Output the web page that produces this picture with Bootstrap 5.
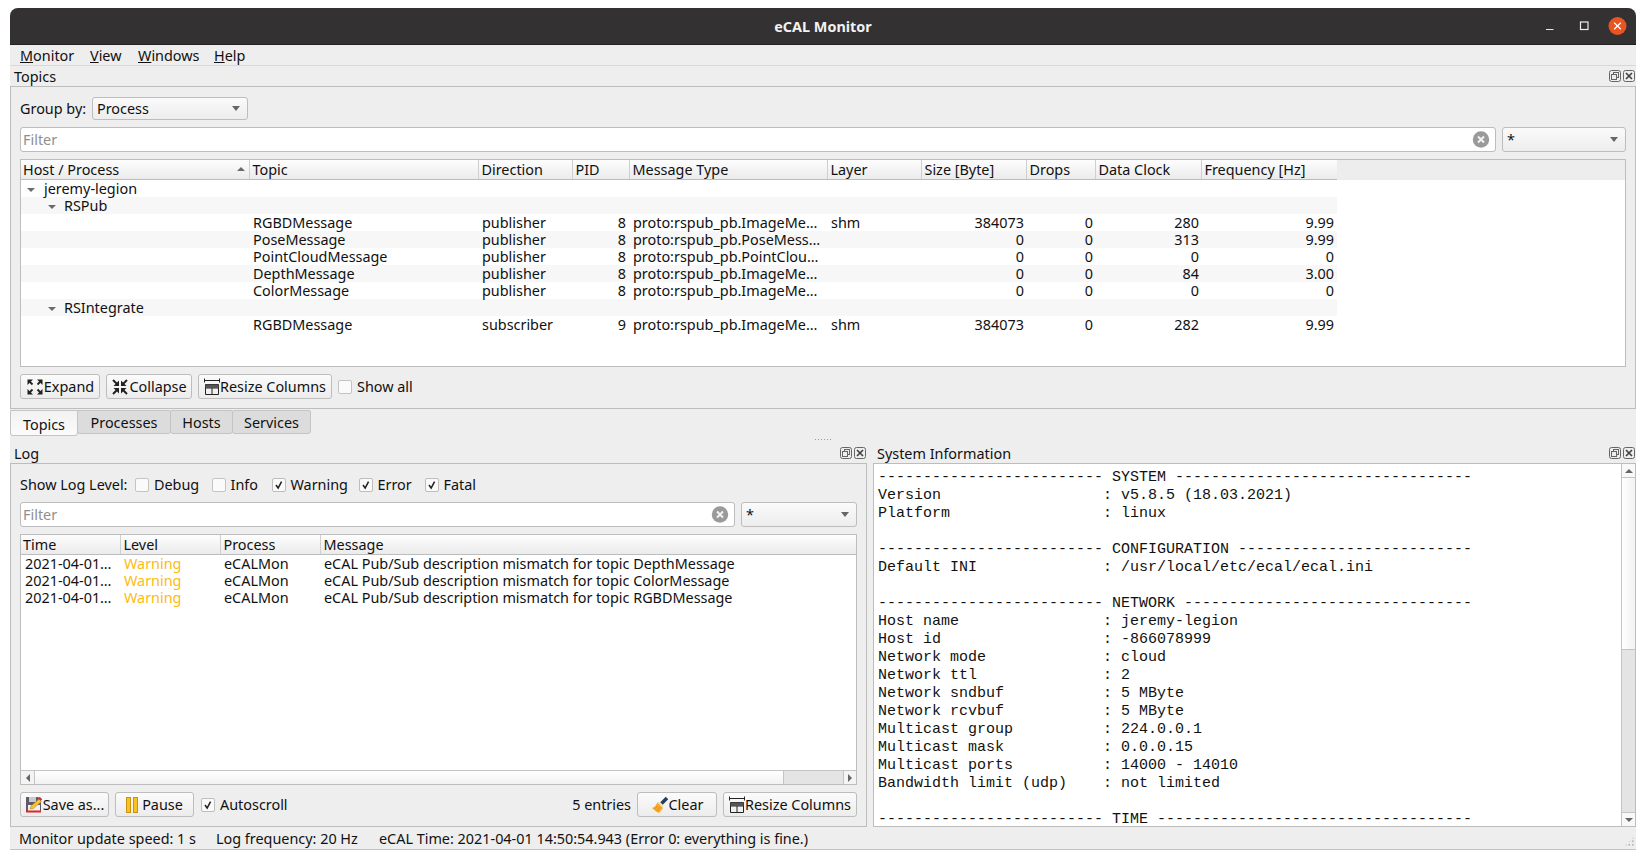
<!DOCTYPE html>
<html lang="en">
<head>
<meta charset="utf-8">
<title>eCAL Monitor</title>
<link href="https://cdn.jsdelivr.net/npm/bootstrap@5.3.0/dist/css/bootstrap.min.css" rel="stylesheet">
<style>
html,body{margin:0;height:859px;overflow:hidden;background:#fff;}
body{font-family:"Noto Sans","Open Sans",sans-serif;font-size:14.4px;line-height:17px;color:#111;}
.qwin{margin:8px 10px 0 10px;width:1626px;height:841px;display:flex;flex-direction:column;background:#eee;border-radius:8px 8px 0 0;overflow:hidden;border-bottom:1px solid #c4c4c4;box-sizing:content-box;}
.qtitle{height:37px;flex:none;background:#333132;color:#f2f2f2;font-weight:700;display:grid;grid-template-columns:1fr auto 1fr;align-items:center;font-family:"Noto Sans",sans-serif;font-size:14.4px;border-bottom:1px solid #222;}
.qctl{justify-self:end;display:flex;align-items:center;padding-right:8px;}
.qctl svg{display:block;}
.qmenu{height:21px;flex:none;display:flex;align-items:center;border-bottom:1px solid #d8d8d8;padding-left:10px;}
.qmenu span{display:block;}
.qmenu .m1{width:70px;}.qmenu .m2{width:48px;}.qmenu .m3{width:76px;}
.qdockhead{height:20px;flex:none;display:flex;align-items:center;justify-content:space-between;padding:0 1px 0 4px;}
.qdockbtns{display:flex;gap:2px;}
.qdockbtns svg{display:block;}
.qpanel{border:1px solid #bdbdbd;background:#eee;padding:0 9px;}
.qtop{height:323px;flex:none;}
.qrow1{margin-top:10px;height:23px;display:flex;align-items:center;}
.qrow2{margin-top:7px;height:25px;display:flex;gap:6px;}
.qlabel{display:block;flex:none;}
.qlb1{width:72px;}.qlb2{width:115px;}
.form-select.qcombo{font-size:14.4px;line-height:17px;padding:0 0 0 4px;color:#111;border:1px solid #bdbdbd;border-radius:3px;box-shadow:none;flex:none;
 background-color:#f4f4f4;background-image:url("data:image/svg+xml,%3Csvg xmlns='http://www.w3.org/2000/svg' width='8' height='5'%3E%3Cpath d='M0 0h8L4 5z' fill='%23666'/%3E%3C/svg%3E"),linear-gradient(#fafafa,#ededed);background-position:right 7px center,0 0;background-size:8px 5px,100% 100%;background-repeat:no-repeat;}
.qgroupsel{width:156px;height:23px;}
.qstarsel{width:124px;height:25px;}
.qstarsel2{width:116px;height:25px;}
.qfilterwrap{position:relative;flex:1 1 auto;}
.form-control.qfilter{height:25px;font-size:14.4px;line-height:17px;padding:0 2px;border:1px solid #bdbdbd;border-radius:3px;color:#111;box-shadow:none;}
.qfilter::placeholder{color:#8f8f8f;opacity:1;}
.qclear{position:absolute;right:6px;top:4px;display:block;}
.qtablebox{margin-top:7px;background:#fff;border:1px solid #bdbdbd;overflow:hidden;}
.qtb1{height:208px;}
.qtb2{height:251px;position:relative;display:flex;flex-direction:column;}
.table.qtable{table-layout:fixed;margin:0;font-size:14.4px;line-height:17px;--bs-table-bg:transparent;--bs-table-striped-bg:transparent;color:#111;width:100%;}
.qtable th,.qtable td{padding:0 3px 0 4px;border:0;box-shadow:none;white-space:nowrap;height:17px;font-weight:400;color:#111;}
.qtable thead th{height:19px;background:linear-gradient(#fdfdfd,#ebebeb);border-right:1px solid #cfcfcf;border-bottom:1px solid #bdbdbd;padding:0 0 0 3px;vertical-align:middle;position:relative;}
.qtable thead th:first-child{padding-left:2px;}
.qtable thead th:last-child{border-right:0;}
.qtable thead th.qheadfill{background:#ededed;border-bottom-color:#ededed;}
.qtable thead th.qnoedge{border-right:0;}
.qstrip td{background:#f7f7f7;}
.qnum{text-align:right;}
.qtable .qnum{padding-left:0;}
.qtable td.qnum:nth-child(n+7):nth-child(-n+9){padding-right:2px;}
.qcaret{display:inline-block;width:0;height:0;border-left:4px solid transparent;border-right:4px solid transparent;border-top:4px solid #6a6a6a;vertical-align:2px;}
.qsort{position:absolute;right:4px;top:7px;width:0;height:0;border-left:4px solid transparent;border-right:4px solid transparent;border-bottom:4px solid #6a6a6a;}
.qtable td.qi1{padding-left:6px;}.qi1 .qcaret{margin-right:9px;}
.qtable td.qi2{padding-left:27px;}.qi2 .qcaret{margin-right:8px;}
.qrow3{margin-top:7px;height:25px;display:flex;align-items:center;}
.btn.qbtn{height:25px;padding:0 3px;font-size:14.4px;line-height:17px;color:#111;background:linear-gradient(#fbfbfb,#ececec);border:1px solid #bdbdbd;border-radius:3px;display:flex;align-items:center;justify-content:center;white-space:nowrap;flex:none;}
.qbtn svg{display:block;flex:none;}
.w-exp{width:80px;}.w-col{width:86px;}.w-res{width:134px;}.w-save{width:89px;}.w-pause{width:79px;}.w-clear{width:80px;}
.btn.qgap6{margin-left:6px;}
.form-check-input.qchk{width:14px;height:14px;margin:0;border:1px solid #c4c4c4;border-radius:2px;background-color:#fafafa;flex:none;box-shadow:none;}
.form-check-input.qchk.qgap6{margin-left:6px;}
.form-check-input.qchk.qgap7{margin-left:7px;}
.form-check-input.qchk:checked{background-color:#fafafa;border-color:#bdbdbd;background-image:url("data:image/svg+xml,%3Csvg xmlns='http://www.w3.org/2000/svg' viewBox='0 0 14 14'%3E%3Cpath d='M3.5 7l2.5 3.5L10 3' fill='none' stroke='%23222' stroke-width='1.8'/%3E%3C/svg%3E");background-size:100% 100%;}
.qchklabel{margin-left:5px;}
.nav.qtabs{height:27px;flex:none;margin-top:0;border:0;align-items:flex-start;flex-wrap:nowrap;padding-top:1px;}
.qtabs .nav-link{height:24px;padding:0;display:flex;align-items:center;justify-content:center;color:#111;background:#dcdcdc;border:1px solid #c4c4c4;border-top-color:#c4c4c4;border-radius:2px 2px 3px 3px;margin:0 0 0 -1px;}
.qtabs .nav-link.active{height:26px;background:linear-gradient(#f2f2f2,#fbfbfb);border-color:#c4c4c4;border-radius:0 0 3px 3px;margin:0;color:#111;padding-top:2px;}
.t1{width:68px;}.t2{width:94px;}.t3{width:63px;}.t4{width:79px;}
.qsplit{height:7px;flex:none;display:flex;justify-content:center;align-items:flex-start;}
.qdots{width:16px;height:1px;margin-top:3px;background:repeating-linear-gradient(90deg,#9a9a9a 0 1px,transparent 1px 3px);}
.qbottom{height:384px;flex:none;display:flex;gap:6px;}
.qlog{width:857px;flex:none;display:flex;flex-direction:column;}
.qsys{flex:1 1 auto;display:flex;flex-direction:column;min-width:0;}
.qlogpanel{height:364px;flex:none;}
.qlevels{height:17px;margin-top:12px;display:flex;align-items:center;}
.qlv{display:flex;align-items:center;flex:none;}
.lv1{width:76.5px;}.lv2{width:60px;}.lv3{width:87px;}.lv4{width:66px;}
.qrow2b{margin-top:9px;}
.qtable td.qlevel-warn{color:#fdbb11;}
.qlogarea{flex:1 1 auto;min-height:0;}
.qhscroll{height:14px;flex:none;display:flex;border-top:1px solid #c4c4c4;background:#e4e4e4;}
.qsb{width:14px;flex:none;background:#f4f4f4;display:flex;align-items:center;justify-content:center;}
.qsb.l{border-right:1px solid #c4c4c4;}.qsb.r{border-left:1px solid #c4c4c4;width:13px;}
.qsthumb{flex:none;width:749px;background:linear-gradient(#fff,#f2f2f2);border-right:1px solid #c4c4c4;}
.qstrack{flex:1 1 auto;}
.qtri{display:block;width:0;height:0;}
.tl{border-top:4px solid transparent;border-bottom:4px solid transparent;border-right:4px solid #666;}
.tr{border-top:4px solid transparent;border-bottom:4px solid transparent;border-left:4px solid #666;}
.tu{border-left:4px solid transparent;border-right:4px solid transparent;border-bottom:4px solid #666;}
.td{border-left:4px solid transparent;border-right:4px solid transparent;border-top:4px solid #666;}
.qentries{margin-left:auto;margin-right:6px;}
.qsyspanel{height:364px;flex:none;padding:0;background:#fff;display:flex;}
.qmono{flex:1 1 auto;min-width:0;margin:0;padding:5px 0 0 4px;overflow:visible;font-family:"Liberation Mono",monospace;font-size:15px;line-height:18px;color:#111;background:#fff;}
.qvscroll{width:14px;flex:none;display:flex;flex-direction:column;border-left:1px solid #c4c4c4;background:#e4e4e4;}
.qvb{height:14px;flex:none;background:#f8f8f8;display:flex;align-items:center;justify-content:center;}
.qvb.u{border-bottom:1px solid #c4c4c4;}.qvb.d{border-top:1px solid #c4c4c4;}
.qvthumb{height:172px;flex:none;background:linear-gradient(90deg,#fff,#f2f2f2);border-bottom:1px solid #c4c4c4;}
.qvtrack{flex:1 1 auto;}
.qstatus{height:21px;flex:none;display:flex;align-items:center;padding:1px 0 0 9px;position:relative;}
.qstatus span{display:block;}
.s1{width:197px;}.s2{width:163px;}
.qgrip{position:absolute;right:1px;bottom:1px;width:11px;height:11px;background-image:radial-gradient(#aaa 0.6px,transparent 0.7px);background-size:3.5px 3.5px;clip-path:polygon(100% 0,100% 100%,0 100%);}
.qicon-gap{margin-right:4px;}
</style>
</head>
<body>
<div class="qwin">
  <div class="qtitle">
    <div></div>
    <div>eCAL Monitor</div>
    <div class="qctl">
      <svg width="100" height="24" viewBox="0 0 100 24"><path d="M18 15.500h7.500" stroke="#e8e8e8" stroke-width="1.200" fill="none"/><rect x="52.500" y="8" width="7.500" height="7.500" fill="none" stroke="#eee" stroke-width="1.200"/><circle cx="89.500" cy="12" r="9" fill="#e95420"/><path d="M86.200 8.700l6.600 6.600M92.800 8.700l-6.600 6.600" stroke="#fff" stroke-width="1.300" fill="none"/></svg>
    </div>
  </div>
  <div class="qmenu"><span class="m1"><u>M</u>onitor</span><span class="m2"><u>V</u>iew</span><span class="m3"><u>W</u>indows</span><span><u>H</u>elp</span></div>
  <div class="qdockhead"><span>Topics</span>
    <span class="qdockbtns">
      <svg width="12" height="12" viewBox="0 0 12 12"><rect x=".5" y=".5" width="11" height="11" rx="2" fill="none" stroke="#666"/><rect x="4.500" y="2.500" width="5" height="5" fill="none" stroke="#666"/><rect x="2.500" y="4.500" width="5" height="5" fill="#eee" stroke="#666"/></svg>
      <svg width="12" height="12" viewBox="0 0 12 12"><rect x=".5" y=".5" width="11" height="11" rx="2" fill="none" stroke="#666"/><path d="M3 3l6 6M9 3l-6 6" stroke="#444" stroke-width="1.700"/></svg>
    </span>
  </div>
  <div class="qpanel qtop">
    <div class="qrow1"><span class="qlabel qlb1">Group by:</span>
      <select class="form-select qcombo qgroupsel"><option>Process</option></select>
    </div>
    <div class="qrow2">
      <div class="qfilterwrap"><input class="form-control qfilter" placeholder="Filter">
        <svg class="qclear" width="18" height="17" viewBox="0 0 18 17"><circle cx="9" cy="8.500" r="8.200" fill="#9a9a9a"/><path d="M6 5.500l6 6M12 5.500l-6 6" stroke="#f2f2f2" stroke-width="2"/></svg>
      </div>
      <select class="form-select qcombo qstarsel"><option>*</option></select>
    </div>
    <div class="qtablebox qtb1">
      <table class="table qtable">
        <colgroup><col style="width:228px"><col style="width:229px"><col style="width:94px"><col style="width:57px"><col style="width:198px"><col style="width:94px"><col style="width:105px"><col style="width:69px"><col style="width:106px"><col style="width:136px"><col></colgroup>
        <thead><tr><th>Host / Process<i class="qsort"></i></th><th>Topic</th><th>Direction</th><th>PID</th><th>Message Type</th><th>Layer</th><th>Size [Byte]</th><th>Drops</th><th>Data Clock</th><th class="qnoedge">Frequency [Hz]</th><th class="qheadfill"></th></tr></thead>
        <tbody>
          <tr><td class="qi1" colspan="10"><i class="qcaret"></i>jeremy-legion</td></tr>
          <tr class="qstrip"><td class="qi2" colspan="10"><i class="qcaret"></i>RSPub</td></tr>
          <tr><td></td><td>RGBDMessage</td><td>publisher</td><td class="qnum">8</td><td>proto:rspub_pb.ImageMe…</td><td>shm</td><td class="qnum">384073</td><td class="qnum">0</td><td class="qnum">280</td><td class="qnum">9.99</td></tr>
          <tr class="qstrip"><td></td><td>PoseMessage</td><td>publisher</td><td class="qnum">8</td><td>proto:rspub_pb.PoseMess…</td><td></td><td class="qnum">0</td><td class="qnum">0</td><td class="qnum">313</td><td class="qnum">9.99</td></tr>
          <tr><td></td><td>PointCloudMessage</td><td>publisher</td><td class="qnum">8</td><td>proto:rspub_pb.PointClou…</td><td></td><td class="qnum">0</td><td class="qnum">0</td><td class="qnum">0</td><td class="qnum">0</td></tr>
          <tr class="qstrip"><td></td><td>DepthMessage</td><td>publisher</td><td class="qnum">8</td><td>proto:rspub_pb.ImageMe…</td><td></td><td class="qnum">0</td><td class="qnum">0</td><td class="qnum">84</td><td class="qnum">3.00</td></tr>
          <tr><td></td><td>ColorMessage</td><td>publisher</td><td class="qnum">8</td><td>proto:rspub_pb.ImageMe…</td><td></td><td class="qnum">0</td><td class="qnum">0</td><td class="qnum">0</td><td class="qnum">0</td></tr>
          <tr class="qstrip"><td class="qi2" colspan="10"><i class="qcaret"></i>RSIntegrate</td></tr>
          <tr><td></td><td>RGBDMessage</td><td>subscriber</td><td class="qnum">9</td><td>proto:rspub_pb.ImageMe…</td><td>shm</td><td class="qnum">384073</td><td class="qnum">0</td><td class="qnum">282</td><td class="qnum">9.99</td></tr>
        </tbody>
      </table>
    </div>
    <div class="qrow3">
      <button class="btn qbtn w-exp"><svg width="18" height="18" viewBox="0 0 18 18"><g fill="#222" stroke="#222"><path d="M1.500 1.500H7L1.500 7z" stroke="none"/><path d="M3 3l3.500 3.500" stroke-width="1.800"/><path d="M16.500 1.500V7L11 1.500z" stroke="none"/><path d="M15 3l-3.500 3.500" stroke-width="1.800"/><path d="M1.500 16.500V11L7 16.500z" stroke="none"/><path d="M3 15l3.500-3.500" stroke-width="1.800"/><path d="M16.500 16.500H11L16.500 11z" stroke="none"/><path d="M15 15l-3.500-3.500" stroke-width="1.800"/></g></svg>Expand</button>
      <button class="btn qbtn w-col qgap6"><svg width="18" height="18" viewBox="0 0 18 18"><g fill="#222" stroke="#222"><path d="M8 8H2.500L8 2.500z" stroke="none"/><path d="M2 2l4.500 4.500" stroke-width="2"/><path d="M10 8h5.500L10 2.500z" stroke="none"/><path d="M16 2l-4.500 4.500" stroke-width="2"/><path d="M8 10H2.500L8 15.500z" stroke="none"/><path d="M2 16l4.500-4.500" stroke-width="2"/><path d="M10 10h5.500L10 15.500z" stroke="none"/><path d="M16 16l-4.500-4.500" stroke-width="2"/></g></svg>Collapse</button>
      <button class="btn qbtn w-res qgap6"><svg width="16" height="18" viewBox="0 0 16 18"><path d="M1 2.500h14M.5 .5v4M15.500 .5v4" stroke="#222" fill="none"/><path d="M1.500 6.500h13v10h-13zM1.500 10h13M8 10v6.500" stroke="#222" fill="none"/><rect x="1.500" y="6.500" width="13" height="3.500" fill="#555"/></svg>Resize Columns</button>
      <input class="form-check-input qchk qgap6" type="checkbox" aria-label="Show all"><span class="qchklabel">Show all</span>
    </div>
  </div>
  <ul class="nav qtabs">
    <li class="nav-item"><a class="nav-link active t1">Topics</a></li>
    <li class="nav-item"><a class="nav-link t2">Processes</a></li>
    <li class="nav-item"><a class="nav-link t3">Hosts</a></li>
    <li class="nav-item"><a class="nav-link t4">Services</a></li>
  </ul>
  <div class="qsplit"><div class="qdots"></div></div>
  <div class="qbottom">
    <div class="qlog">
      <div class="qdockhead"><span>Log</span>
        <span class="qdockbtns">
          <svg width="12" height="12" viewBox="0 0 12 12"><rect x=".5" y=".5" width="11" height="11" rx="2" fill="none" stroke="#666"/><rect x="4.500" y="2.500" width="5" height="5" fill="none" stroke="#666"/><rect x="2.500" y="4.500" width="5" height="5" fill="#eee" stroke="#666"/></svg>
          <svg width="12" height="12" viewBox="0 0 12 12"><rect x=".5" y=".5" width="11" height="11" rx="2" fill="none" stroke="#666"/><path d="M3 3l6 6M9 3l-6 6" stroke="#444" stroke-width="1.700"/></svg>
        </span>
      </div>
      <div class="qpanel qlogpanel d-flex flex-column">
        <div class="qlevels">
          <span class="qlabel qlb2">Show Log Level:</span>
          <label class="qlv lv1"><input class="form-check-input qchk" type="checkbox"><span class="qchklabel">Debug</span></label>
          <label class="qlv lv2"><input class="form-check-input qchk" type="checkbox"><span class="qchklabel">Info</span></label>
          <label class="qlv lv3"><input class="form-check-input qchk" type="checkbox" checked><span class="qchklabel">Warning</span></label>
          <label class="qlv lv4"><input class="form-check-input qchk" type="checkbox" checked><span class="qchklabel">Error</span></label>
          <label class="qlv"><input class="form-check-input qchk" type="checkbox" checked><span class="qchklabel">Fatal</span></label>
        </div>
        <div class="qrow2 qrow2b">
          <div class="qfilterwrap"><input class="form-control qfilter" placeholder="Filter">
            <svg class="qclear" width="18" height="17" viewBox="0 0 18 17"><circle cx="9" cy="8.500" r="8.200" fill="#9a9a9a"/><path d="M6 5.500l6 6M12 5.500l-6 6" stroke="#f2f2f2" stroke-width="2"/></svg>
          </div>
          <select class="form-select qcombo qstarsel2"><option>*</option></select>
        </div>
        <div class="qtablebox qtb2">
          <div class="qlogarea">
          <table class="table qtable">
            <colgroup><col style="width:99px"><col style="width:100px"><col style="width:100px"><col></colgroup>
            <thead><tr><th>Time</th><th>Level</th><th>Process</th><th>Message</th></tr></thead>
            <tbody>
              <tr><td>2021-04-01…</td><td class="qlevel-warn">Warning</td><td>eCALMon</td><td>eCAL Pub/Sub description mismatch for topic DepthMessage</td></tr>
              <tr><td>2021-04-01…</td><td class="qlevel-warn">Warning</td><td>eCALMon</td><td>eCAL Pub/Sub description mismatch for topic ColorMessage</td></tr>
              <tr><td>2021-04-01…</td><td class="qlevel-warn">Warning</td><td>eCALMon</td><td>eCAL Pub/Sub description mismatch for topic RGBDMessage</td></tr>
            </tbody>
          </table>
          </div>
          <div class="qhscroll"><div class="qsb l"><i class="qtri tl"></i></div><div class="qsthumb"></div><div class="qstrack"></div><div class="qsb r"><i class="qtri tr"></i></div></div>
        </div>
        <div class="qrow3">
          <button class="btn qbtn w-save"><svg width="18" height="18" viewBox="0 0 18 18"><path d="M1 1h12l3 3v12H1z" fill="#5b5b6b"/><rect x="4" y="1" width="7" height="5" fill="#c9c9d2"/><rect x="3" y="9" width="12" height="7" fill="#f1f1f1"/><path d="M1 14.500h15v2H1z" fill="#e0242a"/><path d="M5 13l1-3 8-7 2.500 2.500-8 7z" fill="#f4c430" stroke="#a87a10" stroke-width=".5"/><path d="M14 1.500l2.500 2.500" stroke="#e0242a" stroke-width="2"/></svg>Save as...</button>
          <button class="btn qbtn w-pause qgap6"><svg class="qicon-gap" width="12" height="16" viewBox="0 0 12 16"><rect x=".5" y=".5" width="4" height="15" fill="#fcc021" stroke="#c9930c"/><rect x="7.500" y=".5" width="4" height="15" fill="#fcc021" stroke="#c9930c"/></svg>Pause</button>
          <input class="form-check-input qchk qgap7" type="checkbox" checked aria-label="Autoscroll"><span class="qchklabel">Autoscroll</span>
          <span class="qentries">5 entries</span>
          <button class="btn qbtn w-clear"><svg width="18" height="18" viewBox="0 0 18 18"><path d="M10.500 7.500L16 2" stroke="#24405f" stroke-width="3.500" fill="none"/><path d="M7.500 5.500l5 5-.5 1-5.500-5z" fill="#f3d9a0"/><path d="M6.500 6.500L12 12l-2 2.500L8 17l-3-1.500L1 12l3-1.500z" fill="#f9a825"/><path d="M6 15l3-4M3.500 13l3-3" stroke="#e98a15" fill="none"/></svg>Clear</button>
          <button class="btn qbtn w-res qgap6"><svg width="16" height="18" viewBox="0 0 16 18"><path d="M1 2.500h14M.5 .5v4M15.500 .5v4" stroke="#222" fill="none"/><path d="M1.500 6.500h13v10h-13zM1.500 10h13M8 10v6.500" stroke="#222" fill="none"/><rect x="1.500" y="6.500" width="13" height="3.500" fill="#555"/></svg>Resize Columns</button>
        </div>
      </div>
    </div>
    <div class="qsys">
      <div class="qdockhead"><span>System Information</span>
        <span class="qdockbtns">
          <svg width="12" height="12" viewBox="0 0 12 12"><rect x=".5" y=".5" width="11" height="11" rx="2" fill="none" stroke="#666"/><rect x="4.500" y="2.500" width="5" height="5" fill="none" stroke="#666"/><rect x="2.500" y="4.500" width="5" height="5" fill="#eee" stroke="#666"/></svg>
          <svg width="12" height="12" viewBox="0 0 12 12"><rect x=".5" y=".5" width="11" height="11" rx="2" fill="none" stroke="#666"/><path d="M3 3l6 6M9 3l-6 6" stroke="#444" stroke-width="1.700"/></svg>
        </span>
      </div>
      <div class="qpanel qsyspanel">
<pre class="qmono">------------------------- SYSTEM ---------------------------------
Version                  : v5.8.5 (18.03.2021)
Platform                 : linux

------------------------- CONFIGURATION --------------------------
Default INI              : /usr/local/etc/ecal/ecal.ini

------------------------- NETWORK --------------------------------
Host name                : jeremy-legion
Host id                  : -866078999
Network mode             : cloud
Network ttl              : 2
Network sndbuf           : 5 MByte
Network rcvbuf           : 5 MByte
Multicast group          : 224.0.0.1
Multicast mask           : 0.0.0.15
Multicast ports          : 14000 - 14010
Bandwidth limit (udp)    : not limited

------------------------- TIME -----------------------------------</pre>
        <div class="qvscroll"><div class="qvb u"><i class="qtri tu"></i></div><div class="qvthumb"></div><div class="qvtrack"></div><div class="qvb d"><i class="qtri td"></i></div></div>
      </div>
    </div>
  </div>
  <div class="qstatus"><span class="s1">Monitor update speed: 1 s</span><span class="s2">Log frequency: 20 Hz</span><span>eCAL Time: 2021-04-01 14:50:54.943 (Error 0: everything is fine.)</span><i class="qgrip"></i></div>
</div>
<script src="https://cdn.jsdelivr.net/npm/bootstrap@5.3.0/dist/js/bootstrap.bundle.min.js"></script>
</body>
</html>
